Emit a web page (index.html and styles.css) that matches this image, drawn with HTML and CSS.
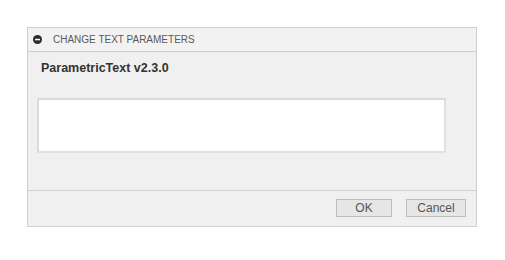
FILE: index.html
```html
<!DOCTYPE html>
<html>
<head>
<meta charset="utf-8">
<link rel="stylesheet" href="styles.css">
</head>
<body>
<div class="dialog">
  <div class="header">
    <svg class="collapse" width="9" height="9" viewBox="0 0 9 9"><circle cx="4.5" cy="4.5" r="4.5" fill="#2b2b2b"/><rect x="2" y="3.8" width="5" height="1.5" fill="#fff"/></svg>
    <span class="header-title">CHANGE TEXT PARAMETERS</span>
  </div>
  <div class="body">
    <div class="title">ParametricText v2.3.0</div>
    <div class="textbox"></div>
  </div>
  <div class="footer">
    <button class="btn ok">OK</button>
    <button class="btn cancel">Cancel</button>
  </div>
</div>
</body>
</html>
```
FILE: styles.css
```css
html, body {
  margin: 0;
  padding: 0;
  background: #fff;
}
body {
  padding: 27px 0 0 27px;
  font-family: "Liberation Sans", Arial, sans-serif;
}
.dialog {
  width: 448px;
  height: 198px;
  border: 1px solid #cfcfcf;
  background: #f0f0f0;
  display: flex;
  flex-direction: column;
}
.header {
  height: 23px;
  border-bottom: 1px solid #cccccc;
  background: #f2f2f2;
  display: flex;
  align-items: center;
  padding-left: 5px;
}
.collapse {
  display: block;
  margin-right: 11px;
}
.header-title {
  font-size: 10px;
  color: #5a5a5a;
}
.body {
  flex: 1;
  padding: 8px 0 0 13px;
  border-bottom: 1px solid #d3d3d3;
}
.title {
  font-size: 12.5px;
  font-weight: bold;
  color: #333;
  height: 16px;
  line-height: 16px;
}
.textbox {
  margin-top: 22px;
  margin-left: -4px;
  width: 405px;
  height: 51px;
  background: #fff;
  border: 2px solid #e0e0e0;
  border-top-color: #dadada;
  border-left-color: #dadada;
}
.footer {
  height: 35px;
  display: flex;
  justify-content: flex-end;
  align-items: flex-start;
  padding: 8px 10px 0 0;
  box-sizing: border-box;
  gap: 14px;
}
.btn {
  height: 18px;
  border: 1px solid #bdbdbd;
  background: #e6e6e6;
  color: #555;
  font-family: "Liberation Sans", Arial, sans-serif;
  font-size: 12px;
  padding: 0;
  line-height: 16px;
}
.ok { width: 56px; }
.cancel { width: 60px; }
```
